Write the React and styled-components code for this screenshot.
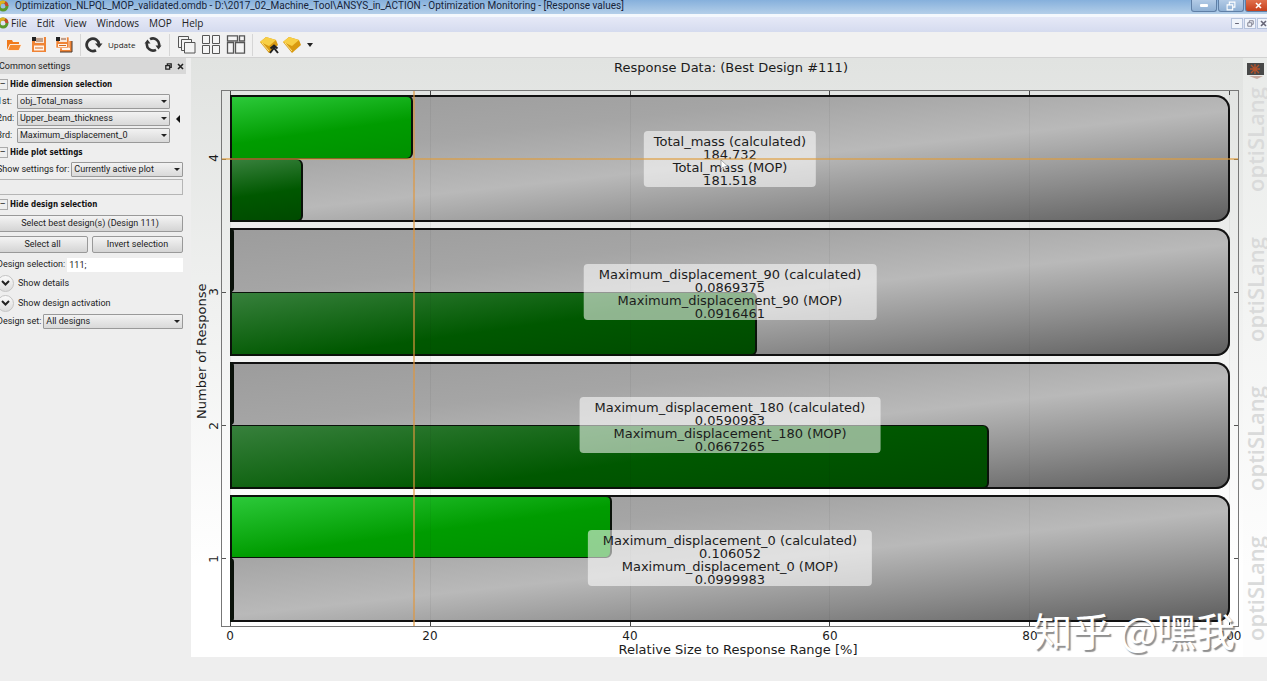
import React, { useState, Fragment } from 'react';
import styled, { createGlobalStyle } from 'styled-components';

const responses = [
    { id: 4, name: 'Total_mass', calculated: '184.732', mop: '181.518', calcSize: 18.3, mopSize: 7.3, pad: 10 },
    { id: 3, name: 'Maximum_displacement_90', calculated: '0.0869375', mop: '0.0916461', calcSize: 0, mopSize: 52.7, pad: 15 },
    { id: 2, name: 'Maximum_displacement_180', calculated: '0.0590983', mop: '0.0667265', calcSize: 0, mopSize: 75.9, pad: 15 },
    { id: 1, name: 'Maximum_displacement_0', calculated: '0.106052', mop: '0.0999983', calcSize: 38.2, mopSize: 0.3, pad: 15 },
];
const ticks = [0, 20, 40, 60, 80, 100];
const menus = ['File', 'Edit', 'View', 'Windows', 'MOP', 'Help'];
const cursor = { x: 18.3 };

const AppLogo = () => (
    <svg width='9' height='12' viewBox='0 0 9 12'>
        <circle cx='3' cy='6' r='4' fill='none' stroke='#5b9a2c' strokeWidth='3' />
        <path d='M-1 6 A4 4 0 0 1 5 2.500' fill='none' stroke='#e0b020' strokeWidth='3' />
        <path d='M5 2.500 A4 4 0 0 1 7 6' fill='none' stroke='#c8452a' strokeWidth='3' />
    </svg>
)

const OpenIcon = () => (
    <svg width='16' height='14' viewBox='0 0 16 14'>
        <path d='M1 12V2h5l1 2h6v2H4z' fill='#f07a1c' />
        <path d='M4 6.500h11.500L13 12.500H1.500z' fill='#f58a30' stroke='#fff' strokeWidth='.7' />
    </svg>
)

const SaveIcon = () => (
    <svg width='16' height='17' viewBox='0 0 16 17'>
        <path d='M1 1h14v15H1z' fill='#ef8436' />
        <path d='M4 1h9v6H4z' fill='#f6e7dc' />
        <path d='M1 1h4v4H1z' fill='#222' />
        <path d='M5 3h7M5 5h7' stroke='#8b5a3c' />
        <path d='M3 9.500h10v5H3z' fill='#fff3ea' />
        <path d='M4 12h8' stroke='#d4681c' />
    </svg>
)

const SaveAsIcon = () => (
    <svg width='18' height='17' viewBox='0 0 18 17'>
        <path d='M5 5h12v11H5z' fill='#ef8436' />
        <path d='M7 12h8v2H7z' fill='#fff3ea' />
        <path d='M17 5v11H5' fill='none' stroke='#4a3a30' />
        <path d='M1 1h13v11H1z' fill='#ef8436' stroke='#fff' strokeWidth='.6' />
        <path d='M4 1h8v5H4z' fill='#f6e7dc' />
        <path d='M1 1h4v4H1z' fill='#222' />
        <path d='M6 3h5' stroke='#8b5a3c' />
        <path d='M3 8h9v3H3z' fill='#fff3ea' />
        <path d='M4 9.500h7' stroke='#d4681c' />
    </svg>
)

const UpdateIcon = () => (
    <svg width='18' height='17' viewBox='0 0 18 17'>
        <path d='M11 14.200A6.200 6.200 0 1 1 14 8' fill='none' stroke='#333' strokeWidth='2.800' />
        <path d='M10 7.500h7.500L14 12z' fill='#333' />
    </svg>
)

const CycleIcon = () => (
    <svg width='18' height='17' viewBox='0 0 18 17'>
        <path d='M6 3.200A6.200 6.200 0 0 1 15 10M12 13.800A6.200 6.200 0 0 1 3 7' fill='none' stroke='#333' strokeWidth='2.600' />
        <path d='M11.500 9.500h6L14.500 13.500zM.5 7.500h6L3.500 3.500z' fill='#333' />
    </svg>
)

const CascadeIcon = () => (
    <svg width='19' height='19' viewBox='0 0 19 19' fill='#f4f4f4' stroke='#555'>
        <path d='M1.500 1.500h10v11h-10z' />
        <path d='M4.500 4.500h10v11h-10z' />
        <path d='M7.500 7.500h10.500v10.500H7.500z' />
    </svg>
)

const TileIcon = () => (
    <svg width='20' height='19' viewBox='0 0 20 19' fill='#f4f4f4' stroke='#555'>
        <path d='M1.500 .5h7v8h-7zM11.500 .5h7v8h-7zM1.500 10.500h7v8h-7zM11.500 10.500h7v8h-7z' />
    </svg>
)

const LayoutIcon = () => (
    <svg width='20' height='19' viewBox='0 0 20 19' fill='#f4f4f4' stroke='#555' strokeWidth='1.300'>
        <path d='M1.500 .8h10v5h-10zM13.500 .8h5v5h-5zM1.500 7.500h6v10.700h-6zM9.500 7.500h9v10.700h-9z' />
    </svg>
)

const GoldIcon = ({ tools }) => (
    <svg width='20' height='18' viewBox='0 0 20 18'>
        <path d='M1 6l6-5 10 3 2 5-9 8z' fill='#d99a10' />
        <path d='M1 6l6-5 10 3-7 6z' fill='#f8cf45' />
        <path d='M3 7l7 8' stroke='#fbe28a' />
        {tools && <path d='M11 17l4-5 4 5M11.500 12.500l3.500-3 3.500 3' fill='none' stroke='#222' strokeWidth='2' />}
    </svg>
)

const MonitorIcon = () => (
    <svg width='18' height='18' viewBox='0 0 18 18'>
        <path d='M1 1h17v12H1z' fill='#484848' />
        <path d='M4 7h10M9 2v10M5 3l8 8M13 3l-8 8' stroke='#b5532c' strokeWidth='1.300' />
        <path d='M3 14h14l-6 3z' fill='#c9aaa0' />
    </svg>
)

const RestoreIcon = ({ size = 9, color = '#555', weight = 1 }) => (
    <svg width={size} height={size} viewBox='0 0 9 9' fill='none' stroke={color} strokeWidth={weight}>
        <path d='M3 3V1h5v4.500H6.500M1 3.500h5V8H1z' />
    </svg>
)

const CloseIcon = ({ color = '#333' }) => (
    <svg width='7' height='7' viewBox='0 0 7 7' stroke={color} strokeWidth='1.600'>
        <path d='M1 1l5 5M6 1L1 6' />
    </svg>
)

const ChevronIcon = () => (
    <svg width='9' height='6' viewBox='0 0 9 6' fill='none' stroke='#222' strokeWidth='2'>
        <path d='M1 1l3.500 3.500L8 1' />
    </svg>
)

const PointerIcon = () => (
    <svg width='9' height='13' viewBox='0 0 9 13'>
        <path d='M1 1v9l2.200-2 1.600 4 1.600-.7L4.800 7.500H8z' fill='#fff' stroke='#888' strokeWidth='.7' />
    </svg>
)

const Select = ({ label, value }) => (
    <Fragment>
        <label htmlFor={value}>{label}</label>
        <SelectBox>
            <select id={value} defaultValue={value}>
                <option>{value}</option>
            </select>
        </SelectBox>
    </Fragment>
)

const Settings = () => {
    const [selection, setSelection] = useState('111;');

    return (
        <Sidebar>
            <DockHeader>
                <span>Common settings</span>
                <DockButton aria-label='Float'><RestoreIcon size={7} color='#222' weight={1.6} /></DockButton>
                <DockButton aria-label='Close'><CloseIcon color='#222' /></DockButton>
            </DockHeader>
            <Group>
                <GroupTitle>Hide dimension selection</GroupTitle>
                <Dimensions>
                    <Select label='1st:' value='obj_Total_mass' />
                    <Select label='2nd:' value='Upper_beam_thickness' />
                    <DockArrow aria-label='Swap' />
                    <Select label='3rd:' value='Maximum_displacement_0' />
                </Dimensions>
                <GroupTitle>Hide plot settings</GroupTitle>
                <Row><Select label='Show settings for:' value='Currently active plot' /></Row>
                <EmptyBox />
                <GroupTitle>Hide design selection</GroupTitle>
                <Buttons>
                    <PushButton $wide>Select best design(s) (Design 111)</PushButton>
                    <PushButton>Select all</PushButton>
                    <PushButton>Invert selection</PushButton>
                </Buttons>
                <Row>
                    <label htmlFor='selection'>Design selection:</label>
                    <TextInput id='selection' value={selection} onChange={e => setSelection(e.target.value)} />
                </Row>
                <Expander><i><ChevronIcon /></i>Show details</Expander>
                <Expander><i><ChevronIcon /></i>Show design activation</Expander>
                <Row><Select label='Design set:' value='All designs' /></Row>
            </Group>
        </Sidebar>
    )
}

const Chart = () => (
    <ChartPanel>
        <ChartTitle>Response Data: (Best Design #111)</ChartTitle>
        <PlotArea>
            <AxisTitle $vertical>Number of Response</AxisTitle>
            <YLabels>
                {responses.map(r => <span key={r.id}>{r.id}</span>)}
            </YLabels>
            <Frame>
                {responses.map(r => (
                    <Track key={r.id}>
                        <Bar $kind='calculated' style={{ width: `${r.calcSize}%` }} />
                        <Bar $kind='mop' style={{ width: `${r.mopSize}%` }} />
                        <Note $pad={r.pad}>
                            <span>{r.name} (calculated)</span>
                            <span>{r.calculated}</span>
                            <span>{r.name} (MOP)</span>
                            <span>{r.mop}</span>
                        </Note>
                        {r.id === 4 && <HorizontalHair />}
                        {r.id === 4 && <Pointer><PointerIcon /></Pointer>}
                    </Track>
                ))}
                <Grid>{ticks.map(t => <i key={t} />)}</Grid>
                <HairLayer><VerticalHair style={{ left: `${cursor.x}%` }} /></HairLayer>
            </Frame>
        </PlotArea>
        <XLabels>
            {ticks.map(t => <span key={t}>{t}</span>)}
        </XLabels>
        <AxisTitle>Relative Size to Response Range [%]</AxisTitle>
        <Watermark>知乎 @嘿我</Watermark>
    </ChartPanel>
)

const App = () => (
    <Fragment>
        <GlobalStyle />
        <Window>
            <TitleBar>
                <AppLogo />
                <h1>Optimization_NLPQL_MOP_validated.omdb - D:\2017_02_Machine_Tool\ANSYS_in_ACTION - Optimization Monitoring - [Response values]</h1>
                <WindowButton aria-label='Minimize'><Dash /></WindowButton>
                <WindowButton aria-label='Restore'><RestoreIcon size={10} color='#fff' /></WindowButton>
                <WindowButton aria-label='Close' $close><CloseIcon color='#fff' /></WindowButton>
            </TitleBar>
            <MenuBar>
                <AppLogo />
                {menus.map(m => <button key={m}>{m}</button>)}
                <SubButtons>
                    <button aria-label='Minimize'><Dash $small /></button>
                    <button aria-label='Restore'><RestoreIcon size={7} color='#667' /></button>
                    <button aria-label='Close'><CloseIcon color='#667' /></button>
                </SubButtons>
            </MenuBar>
            <ToolBar>
                <button aria-label='Open'><OpenIcon /></button>
                <button aria-label='Save'><SaveIcon /></button>
                <button aria-label='Save as'><SaveAsIcon /></button>
                <Separator />
                <button><UpdateIcon /><span>Update</span></button>
                <button aria-label='Auto update'><CycleIcon /></button>
                <Separator />
                <button aria-label='Cascade'><CascadeIcon /></button>
                <button aria-label='Tile'><TileIcon /></button>
                <button aria-label='Layout'><LayoutIcon /></button>
                <Separator />
                <button aria-label='Build MOP'><GoldIcon tools /></button>
                <button aria-label='MOP menu'><GoldIcon /><Caret /></button>
            </ToolBar>
            <Workspace>
                <Settings />
                <Chart />
                <Brand>
                    <MonitorIcon />
                    {[1, 2, 3, 4].map(n => <span key={n}>optiSLang</span>)}
                </Brand>
            </Workspace>
            <StatusBar />
        </Window>
    </Fragment>
)

export default App;

const GlobalStyle = createGlobalStyle`
    * {
        box-sizing: border-box;
    }
    body {
        margin: 0;
        background: #eeeeee;
        overflow-x: hidden;
    }
    button, input, select {
        font: inherit;
        color: inherit;
        margin: 0;
        padding: 0;
        border: none;
        background: none;
    }
    svg {
        display: block;
        flex: none;
    }
`

const Window = styled.div`
    display: flex;
    flex-direction: column;
    min-height: 100vh;
    font-family: 'Open Sans', 'Noto Sans', sans-serif;
    color: #222;
    overflow: hidden;
`

const TitleBar = styled.header`
    display: flex;
    align-items: flex-start;
    height: 14px;
    background: linear-gradient(#86b0dc, #b4cfe9);

    h1 {
        flex: 1;
        margin: 0 0 0 6px;
        font-family: Roboto, sans-serif;
        font-size: 10px;
        line-height: 12px;
        font-weight: 400;
        color: #16243a;
        white-space: nowrap;
    }
`

const WindowButton = styled.button`
    display: flex;
    align-items: center;
    justify-content: center;
    width: 26px;
    height: 12px;
    margin-right: ${p => p.$close ? -4 : 1}px;
    border: 1px solid #5f7fa6;
    border-top: none;
    border-radius: 0 0 3px 3px;
    background: ${p => p.$close ? 'linear-gradient(#e0704c, #c8401c)' : 'linear-gradient(#b3cbe6, #8fb0d4)'};
`

const Dash = styled.i`
    width: ${p => p.$small ? 4 : 8}px;
    height: ${p => p.$small ? 1 : 3}px;
    background: ${p => p.$small ? '#667' : '#fff'};
    border-radius: 1px;
`

const MenuBar = styled.nav`
    display: flex;
    align-items: center;
    gap: 10px;
    height: 18px;
    padding-bottom: 3px;
    border-top: 3px solid #f4f8fd;
    background: linear-gradient(#e6e9f7, #d5dbef);
    font-size: 10px;
    line-height: 12px;

    svg + button {
        margin-left: -8px;
    }
`

const SubButtons = styled.div`
    display: flex;
    gap: 1px;
    margin: 0 -2px 0 auto;

    button {
        display: flex;
        align-items: center;
        justify-content: center;
        width: 12px;
        height: 11px;
        border: 1px solid #b5c3dc;
        background: #f0f4fb;
    }
`

const ToolBar = styled.div`
    display: flex;
    align-items: center;
    gap: 1px;
    height: 26px;
    padding-left: 2px;
    border-bottom: 1px solid #d2d2d2;
    background: #f1f1f1;

    button {
        display: flex;
        align-items: center;
        justify-content: center;
        min-width: 24px;
        height: 22px;
    }
    span {
        padding: 0 5px;
        font-size: 8px;
    }
`

const Separator = styled.i`
    width: 1px;
    height: 22px;
    margin: 0 3px;
    background: #d6d6d6;
`

const Caret = styled.i`
    margin-left: 5px;
    border: 3px solid transparent;
    border-top: 4px solid #222;
    border-bottom: none;
`

const Workspace = styled.main`
    display: flex;
    flex: 1;
`

const Sidebar = styled.aside`
    width: 194px;
    flex: none;
    margin-left: -3px;
    font-family: Roboto, 'DejaVu Sans Condensed', sans-serif;
    font-size: 9px;
    line-height: 11px;
    white-space: nowrap;
`

const DockHeader = styled.div`
    display: flex;
    align-items: center;
    height: 16px;
    margin-right: 5px;
    padding-left: 2px;
    background: #d8d8d8;

    span {
        flex: 1;
    }
`

const DockButton = styled.button`
    display: flex;
    justify-content: center;
    width: 12px;
`

const Group = styled.div`
    display: flex;
    flex-direction: column;
    padding: 3px 8px 0 0;
    gap: 2px;
`

const GroupTitle = styled.h2`
    display: flex;
    align-items: center;
    gap: 2px;
    height: 15px;
    margin: 0;
    font-family: 'DejaVu Sans Condensed', 'DejaVu Sans', sans-serif;
    font-size: 8px;
    font-weight: 700;
    color: #111;

    &::before {
        content: '−';
        width: 9px;
        height: 9px;
        border: 1px solid #aaa;
        font-weight: 400;
        line-height: 7px;
        text-align: center;
    }
`

const Dimensions = styled.div`
    display: grid;
    grid-template-columns: 18px 153px 1fr;
    align-items: center;
    gap: 2px;

    label {
        grid-column: 1;
    }
`

const DockArrow = styled.button`
    width: 0;
    margin-left: 4px;
    border: 4px solid transparent;
    border-right: 4px solid #111;
    border-left: none;
`

const Row = styled.div`
    display: flex;
    align-items: center;
    gap: 2px;
    min-height: 15px;
`

const SelectBox = styled.div`
    flex: 1;
    position: relative;

    select {
        appearance: none;
        display: block;
        width: 100%;
        height: 15px;
        padding: 0 2px;
        border: 1px solid #999;
        border-radius: 1px;
        background: linear-gradient(#f2f2f2, #d9d9d9);
    }
    &::after {
        content: '';
        position: absolute;
        right: 3px;
        top: 6px;
        border: 3px solid transparent;
        border-top: 3px solid #222;
        border-bottom: none;
        pointer-events: none;
    }
`

const EmptyBox = styled.div`
    height: 16px;
    border: 1px solid #b5b5b5;
    background: #ededed;
`

const Buttons = styled.div`
    display: grid;
    grid-template-columns: 1fr 1fr;
    gap: 4px;
    margin: 1px 0 2px;
`

const PushButton = styled.button`
    grid-column: ${p => p.$wide ? 'span 2' : 'auto'};
    height: 17px;
    border: 1px solid #999;
    border-radius: 2px;
    background: linear-gradient(#f4f4f4, #d4d4d4);
`

const TextInput = styled.input`
    flex: 1;
    min-width: 0;
    height: 14px;
    padding: 0 2px;
    background: #fff;
`

const Expander = styled.button`
    display: flex;
    align-items: center;
    gap: 4px;
    height: 18px;

    i {
        display: flex;
        align-items: center;
        justify-content: center;
        width: 17px;
        height: 17px;
        border: 1px solid #c4c4c4;
        border-radius: 50%;
        background: linear-gradient(#fafafa, #dcdcdc);
    }
`

const ChartPanel = styled.section`
    position: relative;
    display: flex;
    flex-direction: column;
    flex: 1;
    background: linear-gradient(#e1e3e1, #ffffff 85%);
    font-family: 'DejaVu Sans', sans-serif;
    font-size: 13px;
    line-height: 13px;
    color: #1c1c1c;
`

const ChartTitle = styled.h2`
    margin: 0;
    padding: 3px 0 0 28px;
    height: 32px;
    font-size: 13px;
    font-weight: 400;
    text-align: center;
`

const PlotArea = styled.div`
    display: flex;
    flex: 1;
    padding: 0 4px;
`

const AxisTitle = styled.div`
    text-align: center;
    ${p => p.$vertical
        ? 'writing-mode: vertical-rl; transform: rotate(180deg); width: 13px; padding-top: 14px;'
        : 'padding: 0 0 1px 42px;'}
`

const YLabels = styled.div`
    display: flex;
    flex-direction: column;
    width: 13px;
    padding: 4px 0;
    gap: 6px;
    font-size: 12px;

    span {
        flex: 1;
        width: 13px;
        writing-mode: vertical-rl;
        transform: rotate(180deg);
        text-align: center;
    }
`

const Frame = styled.div`
    position: relative;
    display: flex;
    flex-direction: column;
    flex: 1;
    gap: 6px;
    padding: 4px 8px;
    border: 1px solid #777;
`

const Track = styled.div`
    position: relative;
    display: grid;
    grid-template-rows: 1fr 1fr;
    flex: 1;
    border-radius: 0 14px 14px 0;
    background: linear-gradient(174deg, #9c9c9c, #a5a5a5 28%, #b9b9b9 52%, #8c8c8c 76%, #5c5c5c);
    box-shadow: inset 0 0 0 2px #111;

    &::before, &::after {
        content: '';
        position: absolute;
        top: 50%;
        width: 4px;
        height: 1px;
        background: #555;
    }
    &::before {
        left: -8px;
    }
    &::after {
        right: -8px;
    }
`

const fills = {
    calculated: 'linear-gradient(172deg, #2cc93a, #009c00 55%, #009000)',
    mop: 'linear-gradient(172deg, #37803c, #005800 55%, #004a00)',
};

const Bar = styled.div`
    min-width: 2px;
    border: 2px solid #0a120a;
    border-width: ${p => p.$kind === 'mop' ? '1px 2px 2px' : '2px 2px 1px'};
    border-radius: 0 6px 6px 0;
    background: ${p => fills[p.$kind]};
`

const Note = styled.div`
    position: absolute;
    top: 50%;
    left: 50%;
    transform: translate(-50%, -50%);
    display: flex;
    flex-direction: column;
    align-items: center;
    padding: 4px ${p => p.$pad}px 0;
    border-radius: 4px;
    background: rgba(255, 255, 255, .56);
    white-space: nowrap;
    z-index: 1;
`

const HorizontalHair = styled.i`
    position: absolute;
    left: -8px;
    right: -8px;
    top: calc(50% - 1px);
    height: 2px;
    background: rgba(224, 156, 60, .6);
    z-index: 2;
`

const Pointer = styled.i`
    position: absolute;
    left: 49%;
    top: 50%;
    z-index: 3;
`

const Grid = styled.div`
    position: absolute;
    inset: 0 8px;
    display: flex;
    justify-content: space-between;

    i {
        width: 1px;
        background: linear-gradient(#444 4px, rgba(0, 0, 0, .05) 4px calc(100% - 4px), #444 calc(100% - 4px));
    }
`

const HairLayer = styled.div`
    position: absolute;
    inset: 0 8px;
`

const VerticalHair = styled.i`
    position: absolute;
    top: 0;
    bottom: 0;
    width: 2px;
    background: rgba(224, 150, 60, .6);
`

const XLabels = styled.div`
    display: flex;
    justify-content: space-between;
    padding: 3px 13px 0 39px;
    font-size: 12px;

    span {
        display: flex;
        justify-content: center;
        width: 0;
    }
`

const Watermark = styled.div`
    position: absolute;
    right: 8px;
    bottom: 6px;
    font-family: 'Noto Sans CJK SC', sans-serif;
    font-size: 39px;
    line-height: 44px;
    color: #fff;
    text-shadow: 2px 2px 1px rgba(70, 70, 70, .6);
    white-space: nowrap;
    z-index: 4;
`

const Brand = styled.aside`
    display: flex;
    flex-direction: column;
    align-items: center;
    justify-content: space-between;
    width: 24px;
    padding: 4px 0 16px;
    background: linear-gradient(#e9ebe9, #fdfdfd 85%);
    font-size: 22px;
    line-height: 24px;
    font-weight: 600;
    color: #d9dada;

    svg {
        margin-bottom: -38px;
    }
    span {
        writing-mode: vertical-rl;
        transform: rotate(180deg);
    }
`

const StatusBar = styled.footer`
    height: 24px;
    background: #eeeeee;
`
